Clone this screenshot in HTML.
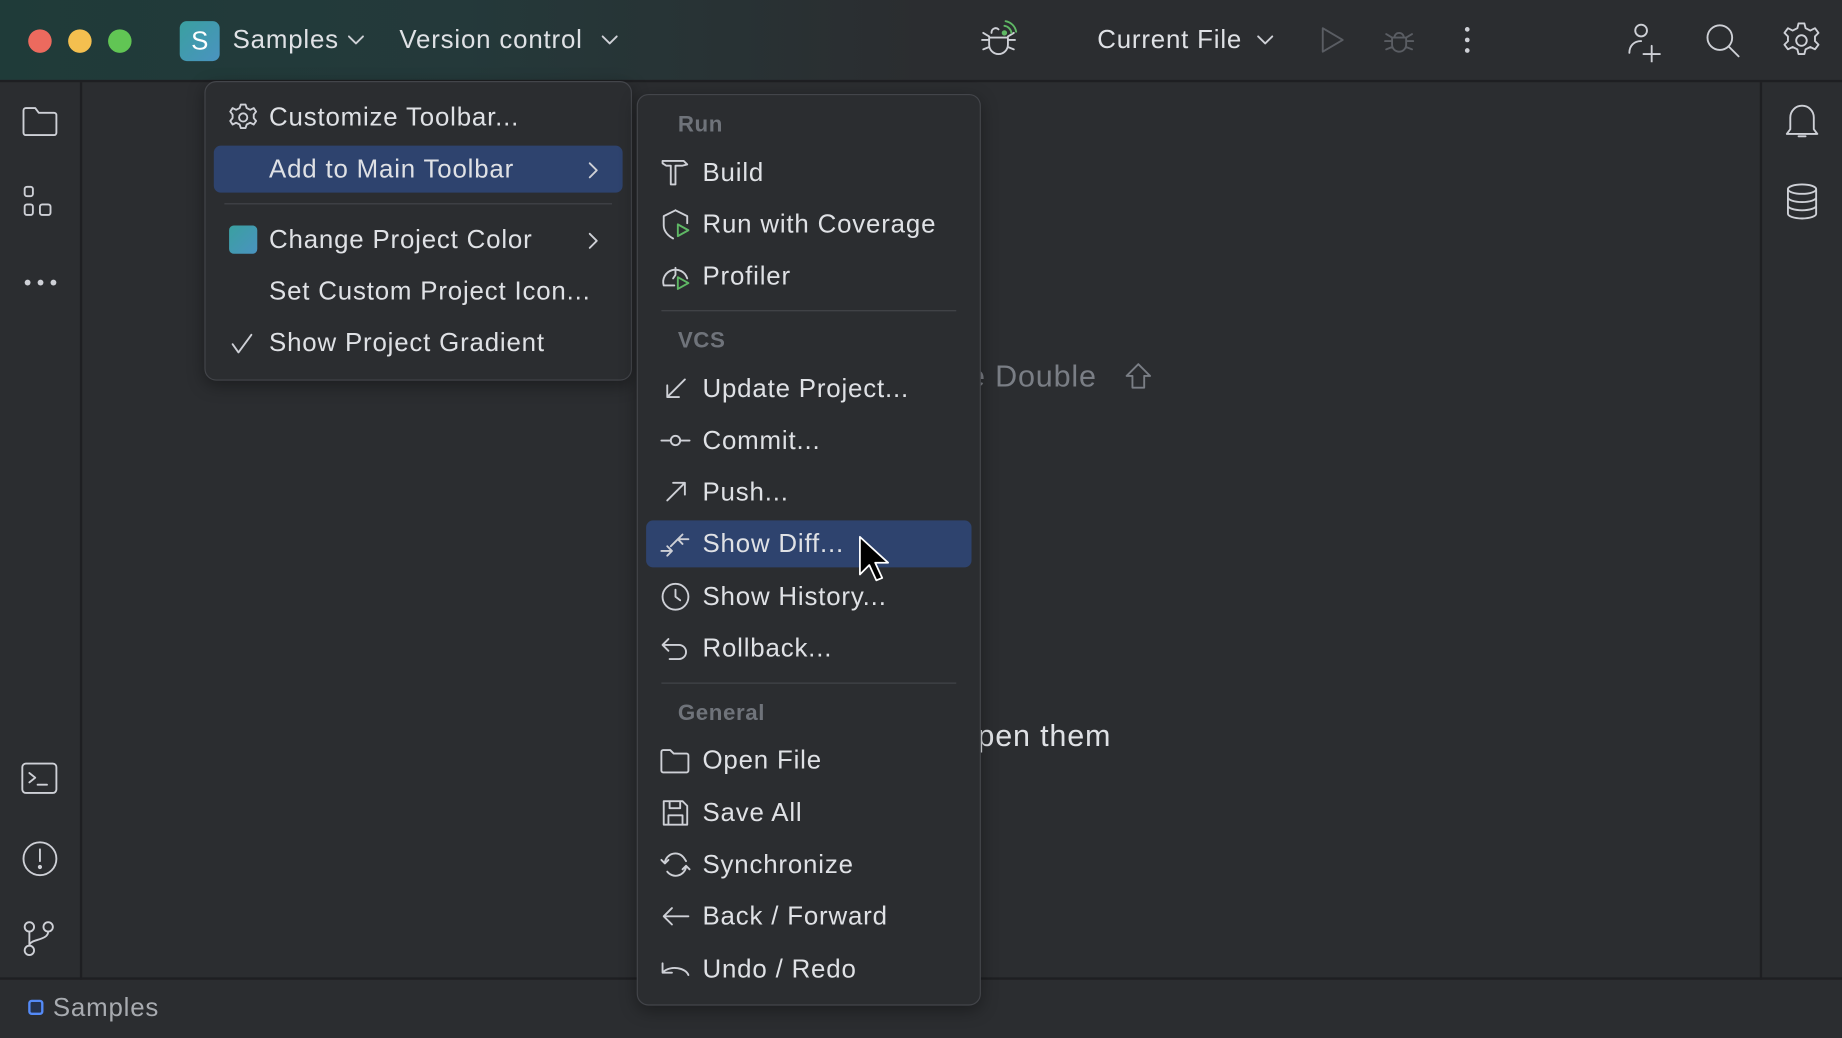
<!DOCTYPE html>
<html><head><meta charset="utf-8"><style>
*{margin:0;padding:0;box-sizing:border-box}
html,body{width:1842px;height:1038px;overflow:hidden;background:#2b2d30}
#w{width:1568px;height:884px;position:relative;transform:scale(1.17474);transform-origin:0 0;font-family:"Liberation Sans",sans-serif;color:#dfe1e5;background:#2b2d30;overflow:hidden}
.a{position:absolute}
.t{font-size:22px;white-space:nowrap;line-height:30px;letter-spacing:0.7px}
svg{position:absolute;fill:none;stroke:#ced0d6;stroke-width:1.6;stroke-linecap:round;stroke-linejoin:round}
.menu{position:absolute;background:#2b2d30;border:1px solid #43454a;border-radius:10px;box-shadow:0 4px 14px rgba(0,0,0,.35)}
.hd{position:absolute;font-size:19px;font-weight:bold;color:#6f737a;line-height:30px;letter-spacing:0.5px}
.sep{position:absolute;height:1px;background:#43454a}
.sel{position:absolute;background:#2e436e;border-radius:6px}
</style></head><body><div id="w">
<div class="a" style="left:0;top:0;width:1568px;height:68px;background:linear-gradient(90deg,#1f3b39 0%,#24393a 25%,#2b2d30 50%)"></div>
<div class="a" style="left:0;top:68px;width:1568px;height:2px;background:#1e1f22"></div>
<div class="a" style="left:68px;top:70px;width:2px;height:764px;background:#1e1f22"></div>
<div class="a" style="left:1498px;top:70px;width:2px;height:764px;background:#1e1f22"></div>
<div class="a" style="left:0;top:832px;width:1568px;height:2px;background:#1e1f22"></div>
<div class="a" style="left:24px;top:25px;width:20px;height:20px;border-radius:50%;background:#ec6a5e"></div>
<div class="a" style="left:58px;top:25px;width:20px;height:20px;border-radius:50%;background:#f4bf4f"></div>
<div class="a" style="left:92px;top:25px;width:20px;height:20px;border-radius:50%;background:#61c554"></div>
<div class="a" style="left:153px;top:18px;width:34px;height:34px;border-radius:6px;background:linear-gradient(135deg,#3aa0a0,#4a93c0);color:#fff;font-size:22px;text-align:center;line-height:34px">S</div>
<div class="a t" style="left:198px;top:19px">Samples</div>
<svg style="left:295px;top:28px" width="16" height="12"><path d="M2 3l6 6 6-6"/></svg>
<div class="a t" style="left:340px;top:19px">Version control</div>
<svg style="left:511px;top:28px" width="16" height="12"><path d="M2 3l6 6 6-6"/></svg>
<svg style="left:832px;top:16px" width="36" height="36"><path d="M12 12c0-4 4-5 6-3M10 16h16v6a8 8 0 0 1-16 0z M4 18h6M26 18h6M5 26l5-2M31 26l-5-2M5 12l5 3M31 12l-5 3"/><circle cx="23" cy="12" r="1.5" fill="#5fb865" stroke="#5fb865"/><path d="M23 6a7 7 0 0 1 6 6M24 2a11 11 0 0 1 9 9" stroke="#5fb865"/></svg>
<div class="a t" style="left:934px;top:19px">Current File</div>
<svg style="left:1069px;top:28px" width="16" height="12"><path d="M2 3l6 6 6-6"/></svg>
<svg style="left:1120px;top:20px" width="28" height="30"><path d="M6 4v20l17-10z" stroke="#5a5d63"/></svg>
<svg style="left:1176px;top:20px" width="30" height="30"><path d="M9 12h12v6a6 6 0 0 1-12 0zM11 12a4 4 0 0 1 8 0M3 15h6M21 15h6M4 22l5-2M26 22l-5-2M4 9l5 3M26 9l-5 3" stroke="#5a5d63"/></svg>
<div class="a" style="left:1247px;top:23px;width:4px;height:4px;border-radius:50%;background:#ced0d6;box-shadow:0 9px 0 #ced0d6,0 18px 0 #ced0d6"></div>
<svg style="left:1382px;top:17px" width="36" height="36"><circle cx="15" cy="9" r="5"/><path d="M5 28c0-6 4-10 10-10M17 29h14M24 22v14"/></svg>
<svg style="left:1450px;top:18px" width="34" height="34"><circle cx="14" cy="14" r="10.5"/><path d="M22 22l8 8"/></svg>
<svg style="left:1516px;top:17px" width="36" height="36"><path d="M15 3h5l1 4 4 2 4-2 3 4-3 3v4l3 3-3 4-4-2-4 2-1 4h-5l-1-4-4-2-4 2-3-4 3-3v-4l-3-3 3-4 4 2 4-2z"/><circle cx="17.5" cy="17.5" r="4.5"/></svg>
<svg style="left:18px;top:88px" width="34" height="30"><path d="M2 6a2 2 0 0 1 2-2h8l3 4h13a2 2 0 0 1 2 2v15a2 2 0 0 1-2 2H4a2 2 0 0 1-2-2z"/></svg>
<svg style="left:18px;top:156px" width="32" height="32"><rect x="3" y="3" width="7" height="8" rx="2"/><rect x="3" y="18" width="7" height="9" rx="2"/><rect x="16" y="18" width="9" height="9" rx="2"/></svg>
<div class="a" style="left:21px;top:238px;width:5px;height:5px;border-radius:50%;background:#ced0d6;box-shadow:11px 0 0 #ced0d6,22px 0 0 #ced0d6"></div>
<svg style="left:17px;top:647px" width="34" height="32"><rect x="2" y="3" width="29" height="25" rx="3"/><path d="M8 11l5 4-5 4M15 21h8"/></svg>
<svg style="left:17px;top:714px" width="34" height="34"><circle cx="17" cy="17" r="14"/><path d="M17 9v10"/><circle cx="17" cy="24" r="1" fill="#ced0d6"/></svg>
<svg style="left:17px;top:782px" width="34" height="34"><circle cx="8" cy="7" r="4"/><circle cx="24" cy="7" r="4"/><circle cx="8" cy="27" r="4"/><path d="M8 11v12M24 11c0 8-16 6-16 12"/></svg>
<svg style="left:1516px;top:86px" width="36" height="36"><path d="M8 24V14a10 10 0 0 1 20 0v10l3 4H5zM15 30h6"/></svg>
<svg style="left:1516px;top:154px" width="36" height="36"><ellipse cx="18" cy="7" rx="12" ry="4"/><path d="M6 7v21c0 2 5 4 12 4s12-2 12-4V7M6 14c0 2 5 4 12 4s12-2 12-4M6 21c0 2 5 4 12 4s12-2 12-4"/></svg>
<div class="a t" style="left:824px;top:305px;font-size:26px;color:#7a7e85">e&nbsp;Double</div>
<svg style="left:955px;top:307px" width="28" height="28"><path d="M14 3l10 10h-5v10h-10v-10h-5z" stroke="#7a7e85"/></svg>
<div class="a t" style="left:832px;top:611px;font-size:26px;color:#dfe1e5">pen them</div>
<div class="a" style="left:24px;top:851px;width:13px;height:13px;border:2px solid #548af7;border-radius:3px;background:#25324d"></div>
<div class="a t" style="left:45px;top:843px;color:#a8abb0">Samples</div>
<div class="menu" style="left:174px;top:69px;width:364px;height:255px"></div>
<div class="sel" style="left:182px;top:124px;width:348px;height:40px"></div>
<svg style="left:194px;top:87px" width="26" height="26"><path d="M11 2h4l1 3 3 1.5 3-1.5 2 3-2 2.5v3l2 2.5-2 3-3-1.5-3 1.5-1 3h-4l-1-3-3-1.5-3 1.5-2-3 2-2.5v-3l-2-2.5 2-3 3 1.5 3-1.5z"/><circle cx="13" cy="13" r="3.5"/></svg>
<div class="a t" style="left:229px;top:85px">Customize Toolbar...</div>
<div class="a t" style="left:229px;top:129px">Add to Main Toolbar</div>
<svg style="left:498px;top:136px" width="14" height="18"><path d="M4 3l6 6-6 6"/></svg>
<div class="sep" style="left:191px;top:173px;width:330px"></div>
<div class="a" style="left:195px;top:192px;width:24px;height:24px;border-radius:4px;background:linear-gradient(135deg,#3aa0a0,#4a93c0)"></div>
<div class="a t" style="left:229px;top:189px">Change Project Color</div>
<svg style="left:498px;top:196px" width="14" height="18"><path d="M4 3l6 6-6 6"/></svg>
<div class="a t" style="left:229px;top:233px">Set Custom Project Icon...</div>
<svg style="left:195px;top:281px" width="24" height="24"><path d="M3 12l5 7L19 4"/></svg>
<div class="a t" style="left:229px;top:277px">Show Project Gradient</div>
<div class="menu" style="left:542px;top:80px;width:293px;height:776px"></div>
<div class="sel" style="left:550px;top:443px;width:277px;height:40px"></div>
<div class="hd" style="left:577px;top:92px">Run</div>
<div class="hd" style="left:577px;top:276px">VCS</div>
<div class="hd" style="left:577px;top:593px">General</div>
<div class="sep" style="left:563px;top:264px;width:251px"></div>
<div class="sep" style="left:563px;top:581px;width:251px"></div>
<svg style="left:561px;top:133px" width="28" height="28"><path d="M3 4h18l3 3-4 1h-6v16h-4V8H6L3 6z"/></svg>
<svg style="left:561px;top:177px" width="28" height="30"><path d="M14 2l10 5v6M14 2L4 7v8c0 5 4 9 8 11" /><path d="M16 14l9 5-9 5z" stroke="#5fb865"/></svg>
<svg style="left:561px;top:221px" width="28" height="30"><path d="M13 22H4a10 10 0 1 1 20-6M14 7v6l-2 3"/><path d="M16 15l9 5-9 5z" stroke="#5fb865"/></svg>
<svg style="left:563px;top:318px" width="26" height="26"><path d="M20 5L5 20M5 10v10h10"/></svg>
<svg style="left:561px;top:362px" width="28" height="26"><circle cx="14" cy="13" r="4"/><path d="M2 13h8M18 13h8"/></svg>
<svg style="left:563px;top:406px" width="26" height="26"><path d="M5 20L20 5M10 5h10v10"/></svg>
<svg style="left:561px;top:450px" width="28" height="28"><path d="M17 9h8M20 5l-4 4 4 4M2 19h8M7 15l4 4-4 4M10 15l6-6" /></svg>
<svg style="left:561px;top:494px" width="28" height="28"><circle cx="14" cy="14" r="11"/><path d="M14 8v6l4 3"/></svg>
<svg style="left:561px;top:538px" width="28" height="28"><path d="M8 6l-5 5 5 5M3 11h14a6 6 0 0 1 0 12h-8"/></svg>
<svg style="left:561px;top:634px" width="28" height="28"><path d="M2 6a1.5 1.5 0 0 1 1.5-1.5h6l3 3h11A1.5 1.5 0 0 1 25 9v13a1.5 1.5 0 0 1-1.5 1.5h-20A1.5 1.5 0 0 1 2 22z"/></svg>
<svg style="left:561px;top:678px" width="28" height="28"><path d="M4 4h16l4 4v16H4zM9 4v6h9V4M8 24v-8h12v8"/></svg>
<svg style="left:561px;top:722px" width="28" height="28"><path d="M5 12a9 9 0 0 1 16-4l2 3M2 10l3 3 3-3M23 16a9 9 0 0 1-16 4M26 18l-3-3-3 3"/></svg>
<svg style="left:561px;top:766px" width="28" height="28"><path d="M25 14H4M11 7l-7 7 7 7"/></svg>
<svg style="left:561px;top:810px" width="28" height="28"><path d="M3 10v8h8M4 17a12 8 0 0 1 21 3"/></svg>
<div class="a t" style="left:598px;top:132px">Build</div>
<div class="a t" style="left:598px;top:176px">Run with Coverage</div>
<div class="a t" style="left:598px;top:220px">Profiler</div>
<div class="a t" style="left:598px;top:316px">Update Project...</div>
<div class="a t" style="left:598px;top:360px">Commit...</div>
<div class="a t" style="left:598px;top:404px">Push...</div>
<div class="a t" style="left:598px;top:448px">Show Diff...</div>
<div class="a t" style="left:598px;top:493px">Show History...</div>
<div class="a t" style="left:598px;top:537px">Rollback...</div>
<div class="a t" style="left:598px;top:632px">Open File</div>
<div class="a t" style="left:598px;top:677px">Save All</div>
<div class="a t" style="left:598px;top:721px">Synchronize</div>
<div class="a t" style="left:598px;top:765px">Back / Forward</div>
<div class="a t" style="left:598px;top:810px">Undo / Redo</div>
<svg style="left:728px;top:455px;stroke:#fff;stroke-width:1.5;fill:#000" width="34" height="46"><path d="M4 2v32l8-8 6 13 5-2-6-13h11z"/></svg>
</div></body></html>
